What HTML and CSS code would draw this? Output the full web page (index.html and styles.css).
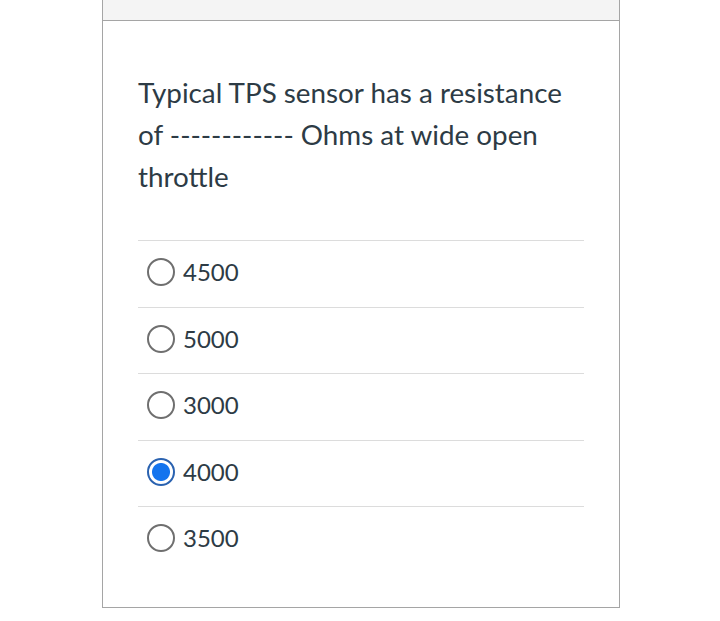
FILE: index.html
```html
<!DOCTYPE html>
<html>
<head>
<meta charset="utf-8">
<link rel="stylesheet" href="styles.css">
</head>
<body>
<div class="card">
  <div class="card-header"></div>
  <div class="card-body">
    <p class="question">Typical TPS sensor has a resistance of ------------ Ohms at wide open throttle</p>
    <div class="answers">
      <label class="answer"><span class="radio"></span><span class="label">4500</span></label>
      <label class="answer"><span class="radio"></span><span class="label">5000</span></label>
      <label class="answer"><span class="radio"></span><span class="label">3000</span></label>
      <label class="answer"><span class="radio checked"></span><span class="label">4000</span></label>
      <label class="answer"><span class="radio"></span><span class="label">3500</span></label>
    </div>
  </div>
</div>
</body>
</html>
```
FILE: styles.css
```css
html, body {
  margin: 0;
  padding: 0;
  background: #ffffff;
}
body {
  font-family: "Lato", "Liberation Sans", sans-serif;
  color: #2d3b45;
}
.card {
  margin-left: 102px;
  width: 518px;
  box-sizing: border-box;
  border-left: 1px solid #a5a5a5;
  border-right: 1px solid #a5a5a5;
  border-bottom: 1px solid #a5a5a5;
}
.card-header {
  height: 20px;
  background: #f4f4f4;
  border-bottom: 1px solid #a5a5a5;
}
.card-body {
  padding: 51px 35px 34px 35px;
}
.question {
  margin: 0 0 42px 0;
  font-size: 27.8px;
  line-height: 42px;
  font-weight: 400;
}
.answers {
  display: flex;
  flex-direction: column;
}
.answer {
  display: flex;
  align-items: center;
  gap: 8px;
  height: 62.5px;
  padding: 0 0 3px 9px;
  border-top: 1px solid #dcdcdc;
  box-sizing: content-box;
}
.radio {
  width: 28px;
  height: 28px;
  box-sizing: border-box;
  border: 2px solid #6f6f6f;
  border-radius: 50%;
  flex: none;
}
.radio.checked {
  border: 2px solid #2a62b0;
  background: radial-gradient(circle, #1474ee 0, #1474ee 8.5px, #ffffff 9.5px);
}
.label {
  font-size: 24px;
  line-height: 30px;
  font-weight: 400;
  color: #2d3b45;
}
```
